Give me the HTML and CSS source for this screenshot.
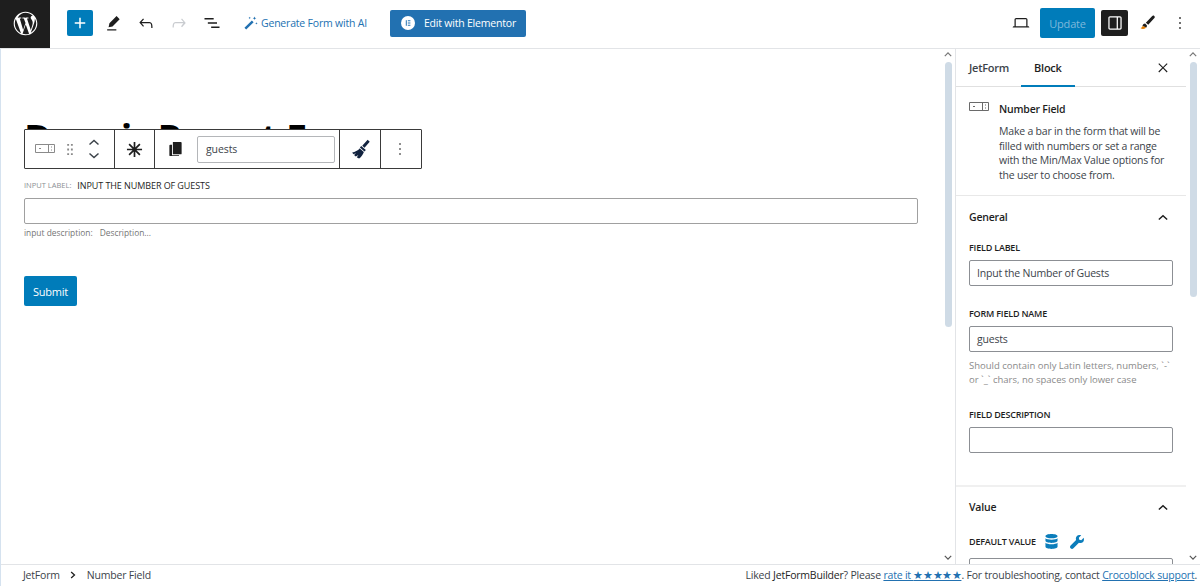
FILE: index.html
```html
<!DOCTYPE html>
<html lang="en">
<head>
<meta charset="utf-8">
<title>Edit Form</title>
<link rel="stylesheet" href="styles.css">
</head>
<body>
<div class="app">
  <header class="topbar">
    <a class="wp-logo">
      <svg viewBox="0 0 24 24" width="27" height="27"><path fill="#fff" d="M12 1.500C6.200 1.500 1.500 6.200 1.500 12S6.200 22.500 12 22.500 22.500 17.800 22.500 12 17.800 1.500 12 1.500zm0 1c2.500 0 4.700 1 6.400 2.500h-.2c-.9 0-1.600.8-1.600 1.700 0 .8.500 1.400 1 2.200.4.600.8 1.400.8 2.600 0 .8-.3 1.800-.7 3.100l-1 3.200-3.400-10.200c.6 0 1.100-.1 1.100-.1.500-.1.500-.8 0-.8 0 0-1.500.1-2.500.1s-2.400-.1-2.400-.1c-.5 0-.6.8 0 .8 0 0 .5.1 1 .1l1.500 4-2.100 6.200L6.900 7.600c.6 0 1.100-.1 1.100-.1.500-.1.500-.8 0-.8 0 0-1.500.1-2.400.1h-.6C6.700 4.200 9.200 2.500 12 2.500zM3.400 8.100 8 20.700C4.800 19.100 2.500 15.800 2.500 12c0-1.400.3-2.700.9-3.900zm8.800 4.800 2.900 8c0 .1 0 .1.100.1-1 .3-2 .5-3.100.5-.9 0-1.800-.1-2.700-.4l2.800-8.200zm7.900-5.500c.9 1.400 1.400 2.900 1.400 4.600 0 3.500-1.900 6.600-4.800 8.300l2.900-8.400c.5-1.400.7-2.500.7-3.500 0-.3 0-.7-.2-1z"/></svg>
    </a>
    <div class="tools">
      <button class="add"><svg viewBox="0 0 24 24" width="18" height="18"><path fill="#fff" d="M11 5h2v6h6v2h-6v6h-2v-6H5v-2h6z"/></svg></button>
      <span class="ico"><svg viewBox="0 0 24 24" width="20" height="20"><path fill="#1e1e1e" d="M16.300 3.700 20 7.400l-8.600 8.700-4.700 1 1-4.800zM5 19.500h11V21H5z"/></svg></span>
      <span class="ico"><svg viewBox="0 0 24 24" width="20" height="20"><path fill="#1e1e1e" d="M18.300 11.700c-.6-.6-1.400-.9-2.300-.9H6.700l2.900-3.300-1.100-1-4.500 5 4.500 5 1.100-1-2.900-3.300H16c.5 0 .9.200 1.300.5 1 1 1 3.400 1 4.500v.7h1.500v-.7c0-1.500 0-4.200-1.500-5.500z"/></svg></span>
      <span class="ico"><svg viewBox="0 0 24 24" width="20" height="20"><path fill="#c9ccd0" d="M15.600 6.500l-1.100 1 2.900 3.300H8c-.9 0-1.700.3-2.300.9-1.400 1.500-1.400 4.200-1.400 5.600v.2h1.500v-.3c0-1.100 0-3.500 1-4.500.3-.3.700-.5 1.300-.5h9.200L14.500 16l1.100 1.100 4.500-5z"/></svg></span>
      <span class="ico"><svg viewBox="0 0 24 24" width="20" height="20"><path fill="#1e1e1e" d="M3 6h11v1.800H3zm4 5.100h11v1.800H7zm4 5.100h10V18H11z"/></svg></span>
      <a class="ai-link">
        <svg viewBox="0 0 16 16" width="14" height="14"><path fill="#2271b1" d="M.5 13.500 9 5l2 2-8.500 8.500zM12 .5l.6 1.500 1.500.6-1.500.6-.6 1.500-.6-1.500-1.500-.6 1.500-.6zM14.200 7l.4 1 1 .4-1 .4-.4 1-.4-1-1-.4 1-.4zM6.500 .8l.4 1 1 .4-1 .4-.4 1-.4-1-1-.4 1-.4z"/></svg>
        Generate Form with AI
      </a>
      <button class="elementor">
        <span class="el-badge"><svg viewBox="0 0 12 12" width="12" height="12"><path fill="#2271b1" d="M3.800 3.200h1v5.600h-1zM5.800 3.200h2.600v1H5.800zm0 2.300h2.600v1H5.800zm0 2.300h2.600v1H5.800z"/></svg></span>
        Edit with Elementor
      </button>
    </div>
    <div class="settings">
      <span class="ico"><svg viewBox="0 0 24 24" width="20" height="20"><path fill="#1e1e1e" d="M20.500 16h-.7V8c0-1.100-.9-2-2-2H6.200c-1.100 0-2 .9-2 2v8h-.7c-.8 0-1.500.7-1.500 1.500h20c0-.8-.7-1.500-1.500-1.500zM5.700 8c0-.3.200-.5.500-.5h11.600c.3 0 .5.200.5.500v8H5.700z"/></svg></span>
      <button class="update">Update</button>
      <span class="ico dark"><svg viewBox="0 0 24 24" width="20" height="20"><path fill="#fff" d="M18 4H6c-1.100 0-2 .9-2 2v12c0 1.100.9 2 2 2h12c1.100 0 2-.9 2-2V6c0-1.100-.9-2-2-2zM5.500 18V6c0-.3.200-.5.500-.5h8v13H6c-.3 0-.5-.2-.5-.5zm13 0c0 .3-.2.500-.5.500h-2.500v-13H18c.3 0 .5.200.5.500z"/></svg></span>
      <span class="ico"><svg viewBox="0 0 24 24" width="20" height="20"><path fill="#1e1e1e" d="M20.700 3.500c-.8-.7-2-.4-2.700.3l-7.400 7.800 2.900 2.500 7.400-8.200c.7-.7.600-1.700-.2-2.400z"/><path fill="#1e1e1e" d="M9.800 12.700c-2 .2-2.900 1.500-3.200 3l4.500 1.800c.8-1 1-2.200.7-2.900z"/><path fill="#e07b00" d="M6.600 15.700c-.2 1.200-1 2-2.400 2.300 1.600 1.700 5.700 1.300 6.900-.5z"/></svg></span>
      <span class="ico"><svg viewBox="0 0 24 24" width="20" height="20"><path fill="#1e1e1e" d="M11 5h2v2h-2zm0 6h2v2h-2zm0 6h2v2h-2z"/></svg></span>
    </div>
  </header>

  <div class="workspace">
    <main class="canvas">
      <div class="editor">
        <h1 class="form-title">Donair Resort Form</h1>
        <div class="block-toolbar">
          <div class="tb-group tb-first">
            <svg viewBox="0 0 20 10" width="20" height="10"><path fill="none" stroke="#8a8a8a" d="M.5.500h19v8H.5zM13.500.500v8"/><path fill="#8a8a8a" d="M4 4h2v1H4zM16 2.500h1v1h-1zM16 5.500h1v1h-1z"/></svg>
            <svg viewBox="0 0 8 14" width="8" height="13"><path fill="#8a8a8a" d="M1 1h2v2H1zm4 0h2v2H5zM1 6h2v2H1zm4 0h2v2H5zM1 11h2v2H1zm4 0h2v2H5z"/></svg>
            <svg class="mover" viewBox="0 0 12 20" width="12" height="20"><path fill="none" stroke="#3c434a" stroke-width="1.500" d="M1.500 5.500 6 1.500l4.500 4M1.500 14.500l4.500 4 4.500-4"/></svg>
          </div>
          <div class="tb-group tb-star">
            <svg viewBox="0 0 18 18" width="17" height="17"><path fill="none" stroke="#1e1e1e" stroke-width="1.800" d="M9 1v16M1 9h16M3.300 3.300l11.400 11.400M3.300 14.700 14.700 3.300"/></svg>
          </div>
          <div class="tb-group tb-name">
            <svg viewBox="0 0 14 16" width="13" height="14"><path fill="#1e1e1e" d="M4 0h9a1 1 0 0 1 1 1v12a1 1 0 0 1-1 1H4z"/><path fill="#1e1e1e" d="M1 3h2v12h8v1H1a1 1 0 0 1-1-1V4a1 1 0 0 1 1-1z"/></svg>
            <span class="name-input">guests</span>
          </div>
          <div class="tb-group tb-brush">
            <svg viewBox="0 0 20 20" width="21" height="21"><path fill="#12233f" d="M16.800.8l2 1.800-5 5.700-2.100-1.900zM10.700 6.600l4.400 3.900-1.300 1.400-4.400-3.900zM9 8.800l4.200 3.600c-.7 2.300-2.400 4.800-4.500 6.200-.9-.3-1.500-.7-2.200-1.200l1.500-2.200-2.500 1.500c-.6-.4-1.100-.9-1.600-1.400l1.900-1.900-2.400 1.100c-.5-.5-.9-1-1.300-1.600 2.600-.5 5.500-1.900 6.900-3.600z"/></svg>
          </div>
          <div class="tb-group tb-more">
            <svg viewBox="0 0 24 24" width="20" height="20"><path fill="#1e1e1e" d="M11.200 5h1.600v2h-1.600zm0 6h1.600v2h-1.600zm0 6h1.600v2h-1.600z"/></svg>
          </div>
        </div>
        <div class="label-row">
          <span class="meta-label">INPUT LABEL:</span>
          <span class="label-value">INPUT THE NUMBER OF GUESTS</span>
        </div>
        <div class="field-box"></div>
        <div class="desc-row">
          <span>input description:</span>
          <span>Description...</span>
        </div>
        <button class="submit">Submit</button>
      </div>
      <div class="scrollbar sb-main">
        <svg viewBox="0 0 10 6" width="8" height="5"><path fill="none" stroke="#777" stroke-width="1.500" d="M1 5l4-4 4 4"/></svg>
        <div class="thumb thumb-main"></div>
        <svg class="sb-down" viewBox="0 0 10 6" width="8" height="5"><path fill="none" stroke="#555" stroke-width="1.500" d="M1 1l4 4 4-4"/></svg>
      </div>
    </main>

    <aside class="sidebar">
      <div class="side-inner">
        <div class="tabs">
          <span class="tab">JetForm</span>
          <span class="tab active">Block</span>
          <svg class="close" viewBox="0 0 24 24" width="18" height="18"><path fill="#1e1e1e" d="M13 11.800l5.100-5.100-1.100-1.100-5 5.100-5.100-5.100-1.100 1.100 5.100 5.100-5.100 5 1.100 1.100 5.100-5.100 5 5.100 1.100-1.100z"/></svg>
        </div>
        <section class="card">
          <svg class="card-ico" viewBox="0 0 20 10" width="20" height="10"><path fill="none" stroke="#6a6a6a" d="M.5.500h19v8H.5zM13.500.500v8"/><path fill="#6a6a6a" d="M4 4h2v1H4zM16 2.500h1v1h-1zM16 5.500h1v1h-1z"/></svg>
          <div class="card-text">
            <h2>Number Field</h2>
            <p>Make a bar in the form that will be filled with numbers or set a range with the Min/Max Value options for the user to choose from.</p>
          </div>
        </section>
        <section class="panel panel-general">
          <div class="panel-head"><span>General</span><svg viewBox="0 0 12 8" width="10" height="7"><path fill="none" stroke="#1e1e1e" stroke-width="1.700" d="M1 6.500 6 1.800l5 4.700"/></svg></div>
          <label class="cap">FIELD LABEL</label>
          <div class="input">Input the Number of Guests</div>
          <label class="cap cap-next">FORM FIELD NAME</label>
          <div class="input">guests</div>
          <p class="help">Should contain only Latin letters, numbers, `-` or `_` chars, no spaces only lower case</p>
          <label class="cap cap-next">FIELD DESCRIPTION</label>
          <div class="input"></div>
        </section>
        <section class="panel panel-value">
          <div class="panel-head"><span>Value</span><svg viewBox="0 0 12 8" width="10" height="7"><path fill="none" stroke="#1e1e1e" stroke-width="1.700" d="M1 6.500 6 1.800l5 4.700"/></svg></div>
          <div class="cap-row">
            <label class="cap">DEFAULT VALUE</label>
            <svg class="db-ico" viewBox="0 0 14 16" width="13" height="15"><path fill="#0b7dbb" d="M7 0c3.600 0 6.500 1 6.500 2.300S10.600 4.600 7 4.600.5 3.600.5 2.300 3.400 0 7 0zM.5 4.500C1.500 5.600 4 6 7 6s5.500-.4 6.500-1.500v2.700C13.500 8.500 10.600 9.500 7 9.500S.5 8.500.5 7.200zm0 4.800C1.500 10.400 4 10.900 7 10.900s5.500-.5 6.500-1.600v4.400C13.500 15 10.600 16 7 16s-6.500-1-6.500-2.300z"/></svg>
            <svg class="wrench-ico" viewBox="0 0 16 16" width="14" height="14"><path fill="#0b7dbb" d="M15.600 3.200l-2.700 2.700-2.300-.5-.5-2.300L12.800.4C11-.2 9-.1 7.900 1 6.600 2.300 6.400 4.200 7 5.700L.7 12c-.9.900-.9 2.300 0 3.200.9.900 2.300.9 3.200 0l6.300-6.300c1.600.6 3.500.4 4.800-.9 1.100-1.100 1.200-3.100.6-4.800z"/></svg>
          </div>
          <div class="input"></div>
        </section>
      </div>
      <div class="scrollbar sb-side">
        <svg viewBox="0 0 10 6" width="8" height="5"><path fill="none" stroke="#777" stroke-width="1.500" d="M1 5l4-4 4 4"/></svg>
        <div class="thumb thumb-side"></div>
        <svg class="sb-down" viewBox="0 0 10 6" width="8" height="5"><path fill="none" stroke="#555" stroke-width="1.500" d="M1 1l4 4 4-4"/></svg>
      </div>
    </aside>
  </div>

  <footer class="statusbar">
    <nav class="crumbs">
      <span>JetForm</span>
      <svg viewBox="0 0 8 10" width="6" height="8"><path fill="none" stroke="#1e1e1e" stroke-width="1.700" d="M1.500 1 6 5 1.500 9"/></svg>
      <span>Number Field</span>
    </nav>
    <p class="notice">Liked <b>JetFormBuilder</b>? Please <a>rate it <span class="stars">★★★★★</span></a>. For troubleshooting, contact <a>Crocoblock support</a>.</p>
  </footer>
</div>
</body>
</html>
```
FILE: styles.css
```css
* { box-sizing: border-box; }
html, body { margin: 0; height: 100%; overflow: hidden; background: #fff; }
body { font-family: "Open Sans", "Noto Sans", sans-serif; font-size: 10.5px; letter-spacing: -.2px; color: #1e1e1e; }
button { font: inherit; letter-spacing: inherit; border: 0; padding: 0; }
.app { height: 586px; display: flex; flex-direction: column; border-left: 1px solid #d5e2ef; }

.topbar { height: 49px; flex: none; display: flex; align-items: center; border-bottom: 1px solid #e2e4e7; margin-left: -1px; }
.wp-logo { width: 50px; height: 48px; background: #1e1e1e; display: flex; align-items: center; justify-content: center; padding-bottom: 1px; }
.tools { display: flex; align-items: center; margin: -2px 0 0 17px; }
.add { width: 26px; height: 26px; background: #007cba; border-radius: 2px; display: flex; align-items: center; justify-content: center; margin-right: 9px; }
.ico { width: 22px; height: 22px; display: flex; align-items: center; justify-content: center; }
.tools .ico { margin-right: 11px; }
.ai-link { display: flex; align-items: center; gap: 3px; color: #2271b1; margin-left: 10px; }
.elementor { margin-left: 23px; width: 136px; height: 27px; background: #2271b1; color: #fff; border-radius: 2px; display: flex; align-items: center; padding-left: 11px; gap: 9px; }
.el-badge { width: 14px; height: 14px; border-radius: 50%; background: #fff; display: flex; align-items: center; justify-content: center; }
.settings { margin: -2px 0 0 auto; display: flex; align-items: center; padding-right: 9px; }
.update { width: 55px; height: 30px; background: #007cba; color: #7fb8da; border-radius: 2px; margin: 0 6px 0 8px; font-size: 11px; }
.ico.dark { width: 27px; height: 26px; background: #1e1e1e; border-radius: 2px; margin-right: 8px; }
.settings .ico:last-child { margin-left: 11px; }

.workspace { flex: 1; min-height: 0; display: flex; }
.canvas { width: 955px; flex: none; display: flex; border-right: 1px solid #e2e4e7; overflow: hidden; }
.editor { flex: 1; padding: 68px 0 0 23px; min-width: 0; }
.form-title { margin: 0; height: 12px; overflow: hidden; font-size: 38px; line-height: 40px; font-weight: 700; letter-spacing: -.7px; color: #000; white-space: nowrap; }
.block-toolbar { display: flex; height: 40px; width: 398px; border: 1px solid #3a3a3a; border-radius: 1px; background: #fff; }
.tb-group { display: flex; align-items: center; justify-content: center; border-right: 1px solid #3a3a3a; flex: none; }
.tb-group:last-child { border-right: 0; }
.tb-first { width: 90px; gap: 11px; justify-content: flex-start; padding-left: 10px; }
.mover { margin-left: 3px; }
.tb-star { width: 40px; }
.tb-name { width: 185px; gap: 15px; justify-content: flex-start; padding-left: 14px; }
.name-input { width: 138px; height: 27px; border: 1px solid #b4b6b9; border-radius: 2px; padding: 0 8px; line-height: 25px; color: #3c434a; letter-spacing: -.1px; }
.tb-brush { width: 41px; }
.tb-more { flex: 1; padding-right: 2px; }
.label-row { display: flex; align-items: center; gap: 6px; margin-top: 10px; height: 12px; letter-spacing: 0; }
.meta-label { font-size: 7.5px; color: #8c8f94; }
.label-value { font-size: 9px; font-weight: 500; letter-spacing: -.08px; color: #1e1e1e; }
.field-box { width: 894px; height: 26px; margin-top: 7px; border: 1px solid #a0a0a0; border-radius: 2px; }
.desc-row { display: flex; gap: 7px; margin-top: 3px; font-size: 8.4px; letter-spacing: 0; color: #757575; }
.submit { display: block; margin-top: 38px; width: 53px; height: 30px; background: #007cba; color: #fff; border-radius: 2px; font-size: 11px; }

.scrollbar { flex: none; display: flex; flex-direction: column; align-items: center; padding-top: 3px; }
.sb-down { margin-top: auto; margin-bottom: 4px; }
.thumb { width: 7px; background: #cfdbe6; border-radius: 4px; margin-top: 5px; }
.sb-main { width: 8px; margin-right: 3px; }
.thumb-main { height: 265px; }
.sb-side { width: 14px; }
.thumb-side { height: 235px; }

.sidebar { flex: 1; display: flex; min-width: 0; }
.side-inner { width: 230px; flex: none; overflow: hidden; }
.tabs { height: 38px; display: flex; align-items: center; border-bottom: 1px solid #e0e0e0; position: relative; padding-left: 13px; gap: 25px; font-size: 11px; font-weight: 600; letter-spacing: -.25px; }
.tab { height: 38px; line-height: 37px; color: #3c434a; }
.tab.active { padding: 0 13px; margin-left: -13px; border-bottom: 2px solid #007cba; color: #1e1e1e; }
.close { position: absolute; right: 14px; top: 10px; }
.card { display: flex; gap: 10px; padding: 15px 13px 0; height: 109px; border-bottom: 1px solid #e8e8e8; }
.card-ico { flex: none; }
.card-text h2 { margin: 0; font-size: 10.5px; font-weight: 600; line-height: 14px; }
.card-text p { margin: 8px 0 0; line-height: 14.7px; color: #3c434a; }
.panel { padding: 13px 13px 0; }
.panel-general { height: 291px; border-bottom: 2px solid #f0f0f0; }
.panel-value { padding-top: 12px; }
.panel-head { display: flex; justify-content: space-between; align-items: center; height: 16px; font-weight: 600; padding-right: 5px; margin-bottom: 16px; }
.cap { display: block; font-size: 9px; line-height: 13px; font-weight: 600; letter-spacing: -.2px; color: #1e1e1e; margin-bottom: 6px; }
.cap-next { margin-top: 21px; }
.input { height: 26px; border: 1px solid #8c8f94; border-radius: 2px; padding: 0 7px; line-height: 25px; color: #3c434a; }
.help { margin: 7px 0 0; font-size: 9.5px; line-height: 14px; letter-spacing: 0; color: #8a8a8a; }
.cap-row { display: flex; align-items: center; margin: 19px 0 9px; }
.cap-row .cap { margin: 0; }
.db-ico { margin-left: 9px; }
.wrench-ico { margin-left: 12px; }

.statusbar { flex: none; height: 22px; display: flex; align-items: center; justify-content: space-between; border-top: 1px solid #e2e4e7; padding: 0 3px 2px 22px; color: #3c434a; }
.crumbs { display: flex; align-items: center; gap: 10.5px; }
.notice { margin: 0; }
.notice a { color: #2271b1; text-decoration: underline; }
.notice b { font-weight: 500; color: #1e1e1e; }
.stars { letter-spacing: -.4px; }
```
